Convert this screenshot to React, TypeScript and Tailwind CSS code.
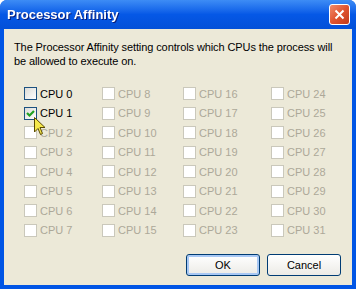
import React from "react";

const cols = [
  { w: "w-[78px]", start: 0 },
  { w: "w-[81px]", start: 8 },
  { w: "w-[88px]", start: 16 },
  { w: "w-[70px]", start: 24 },
];

function Box({ state }: { state: "enabled" | "checked" | "disabled" }) {
  if (state === "disabled") {
    return <div className="w-[13px] h-[13px] border border-[#cac8bb] bg-white shrink-0" />;
  }
  return (
    <div className="w-[13px] h-[13px] border border-[#1c5180] bg-gradient-to-br from-[#dcdcd7] to-white shrink-0 flex items-center justify-center">
      {state === "checked" && (
        <svg width="11" height="11" viewBox="0 0 11 11">
          <path d="M2 5 L4.5 7.5 L9 3" stroke="#21a121" strokeWidth="2.2" fill="none" />
        </svg>
      )}
    </div>
  );
}

export default function App() {
  return (
    <div
      className="w-[356px] h-[289px] flex flex-col bg-[#0055e5] rounded-t-[7px] overflow-hidden relative"
      style={{ fontFamily: '"Liberation Sans", Arial, sans-serif' }}
    >
      <div className="h-[29px] shrink-0 flex items-center justify-between pl-[7px] pr-[6px] bg-gradient-to-b from-[#3d8cf5] via-[#0558e6] to-[#0350d8]">
        <span className="text-white font-bold text-[13px] drop-shadow-[1px_1px_0_#0a1e7a]">
          Processor Affinity
        </span>
        <div className="w-[21px] h-[21px] rounded-[3px] border border-white bg-gradient-to-br from-[#f08a6a] via-[#e0532f] to-[#c23a1a] flex items-center justify-center">
          <svg width="11" height="11" viewBox="0 0 11 11">
            <path d="M1.5 1.5 L9.5 9.5 M9.5 1.5 L1.5 9.5" stroke="white" strokeWidth="2" />
          </svg>
        </div>
      </div>
      <div className="flex-1 mx-[4px] mb-[4px] bg-[#ece9d8] flex flex-col">
        <p className="pt-[11px] pl-[10px] text-[11px] leading-[14px] tracking-[-0.1px] text-black">
          The Processor Affinity setting controls which CPUs the process will
          <br />
          be allowed to execute on.
        </p>
        <div className="flex pl-[20px] mt-[16px]">
          {cols.map((c) => (
            <div key={c.start} className={`${c.w} flex flex-col`}>
              {Array.from({ length: 8 }).map((_, i) => {
                const n = c.start + i;
                const state = n === 0 ? "enabled" : n === 1 ? "checked" : "disabled";
                return (
                  <div key={n} className="h-[19.5px] flex items-center gap-[3px]">
                    <Box state={state} />
                    <span
                      className={`text-[11px] ${state === "disabled" ? "text-[#aca899]" : "text-black"}`}
                    >
                      CPU {n}
                    </span>
                  </div>
                );
              })}
            </div>
          ))}
        </div>
        <div className="flex justify-end gap-[7px] pr-[11px] mt-auto mb-[9px]">
          {["OK", "Cancel"].map((t) => (
            <div
              key={t}
              className={`w-[74px] h-[22px] rounded-[3px] border border-[#003c74] bg-gradient-to-b from-white to-[#ecebe6] flex items-center justify-center text-[11px] text-black ${
                t === "OK" ? "shadow-[inset_0_0_0_2px_#a8c8f4]" : ""
              }`}
            >
              {t}
            </div>
          ))}
        </div>
      </div>
      <svg className="absolute left-[34px] top-[117px]" width="12" height="19" viewBox="0 0 12 19">
        <path d="M0.5 0.5 L0.5 15 L4 11.5 L6.5 17.5 L8.5 16.5 L6 10.5 L11 10.5 Z" fill="#f5e84a" stroke="#5a4a00" strokeWidth="1" />
      </svg>
    </div>
  );
}
